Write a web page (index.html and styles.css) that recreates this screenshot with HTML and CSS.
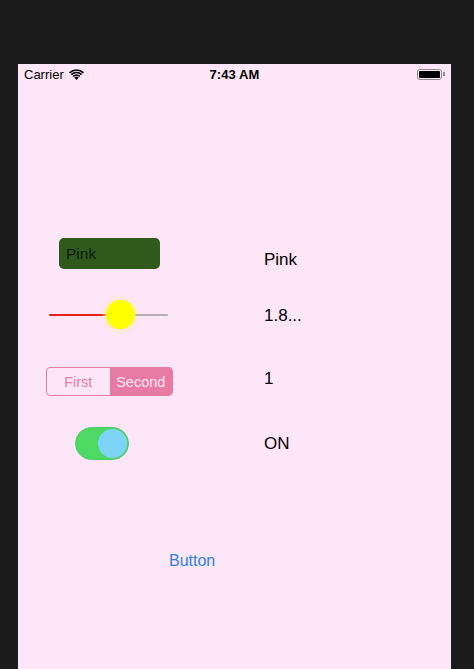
FILE: index.html
```html
<!DOCTYPE html>
<html>
<head>
<meta charset="utf-8">
<link rel="stylesheet" href="styles.css">
</head>
<body>
<div class="screen">
  <div class="status">
    <div class="status-left">
      <span class="carrier">Carrier</span>
      <svg class="wifi" width="15" height="11" viewBox="0 0 15 11">
        <path d="M7.5 11 L5.3 8.6 A3.2 3.2 0 0 1 9.7 8.6 Z" fill="#000"/>
        <path d="M3.6 6.8 A5.6 5.6 0 0 1 11.4 6.8 L10.3 8 A4.1 4.1 0 0 0 4.7 8 Z" fill="#000"/>
        <path d="M1.8 5 A8.2 8.2 0 0 1 13.2 5 L12.1 6.2 A6.7 6.7 0 0 0 2.9 6.2 Z" fill="#000"/>
        <path d="M0 3.2 A10.8 10.8 0 0 1 15 3.2 L13.9 4.4 A9.3 9.3 0 0 0 1.1 4.4 Z" fill="#000"/>
      </svg>
    </div>
    <div class="time">7:43 AM</div>
    <div class="status-right">
      <div class="battery"><div class="battery-fill"></div></div>
      <div class="battery-nub"></div>
    </div>
  </div>

  <div class="content">
    <div class="row row1">
      <div class="cell"><div class="field">Pink</div></div>
      <div class="label l1">Pink</div>
    </div>
    <div class="row row2">
      <div class="cell">
        <div class="slider">
          <div class="track-min"></div>
          <div class="thumb"></div>
          <div class="track-max"></div>
        </div>
      </div>
      <div class="label l2">1.8...</div>
    </div>
    <div class="row row3">
      <div class="cell">
        <div class="segmented">
          <div class="seg">First</div>
          <div class="seg seg-on">Second</div>
        </div>
      </div>
      <div class="label l3">1</div>
    </div>
    <div class="row row4">
      <div class="cell">
        <div class="switch"><div class="knob"></div></div>
      </div>
      <div class="label l4">ON</div>
    </div>
    <div class="button-row"><span class="btn">Button</span></div>
  </div>
</div>
</body>
</html>
```
FILE: styles.css
```css
html, body {
  margin: 0;
  padding: 0;
  background: #1c1c1c;
  width: 474px;
  height: 669px;
  overflow: hidden;
}
body {
  font-family: "Liberation Sans", Arial, sans-serif;
}
.screen {
  margin-left: 18px;
  margin-top: 64px;
  width: 433px;
  height: 605px;
  background: #fde6f8;
  display: flex;
  flex-direction: column;
}
.status {
  height: 20px;
  display: flex;
  align-items: center;
  justify-content: space-between;
  padding: 0 6px;
  font-size: 13px;
  color: #000;
}
.status-left {
  display: flex;
  align-items: center;
  gap: 5px;
  width: 120px;
}
.wifi { display: block; }
.time {
  font-weight: bold;
  font-size: 13px;
  letter-spacing: 0.1px;
}
.status-right {
  width: 120px;
  display: flex;
  justify-content: flex-end;
  align-items: center;
}
.battery {
  width: 21px;
  height: 7px;
  border: 1.5px solid #8e8a8e;
  border-radius: 3px;
  padding: 1px;
  display: flex;
}
.battery-fill {
  flex: 1;
  background: #000;
  border-radius: 1px;
}
.battery-nub {
  width: 1.5px;
  height: 4px;
  background: #8e8a8e;
  margin-left: 1px;
}
.content {
  display: flex;
  flex-direction: column;
  padding-top: 154px;
}
.row {
  display: flex;
  align-items: flex-start;
}
.cell {
  width: 246px;
  display: flex;
}
.label {
  font-size: 17px;
  line-height: 20px;
  color: #000;
}
.row1 { height: 31px; }
.l1 { margin-top: 12px; }
.field {
  margin-left: 41px;
  height: 31px;
  padding-left: 7px;
  box-sizing: border-box;
  width: 101px;
  background: #2f5a1c;
  border-radius: 5px;
  font-size: 15.5px;
  line-height: 31px;
  color: #0e1a07;
}
.row2 { margin-top: 31px; height: 29px; }
.l2 { margin-top: 6px; }
.slider {
  margin-left: 31px;
  width: 119px;
  height: 29px;
  display: flex;
  align-items: center;
}
.track-min {
  width: 57px;
  height: 2px;
  background: #e3201c;
  border-radius: 1px;
}
.thumb {
  width: 29px;
  height: 29px;
  border-radius: 50%;
  background: #ffff00;
  box-shadow: 0 0 4px 2px rgba(255, 236, 160, 0.7);
  flex-shrink: 0;
}
.track-max {
  flex: 1;
  height: 2px;
  background: #b5adb6;
  border-radius: 1px;
}
.row3 { margin-top: 38px; height: 29px; }
.l3 { margin-top: 2px; }
.segmented {
  margin-left: 28px;
  width: 127px;
  height: 29px;
  box-sizing: border-box;
  border: 1px solid #e87ba3;
  border-radius: 4px;
  display: flex;
  overflow: hidden;
}
.seg {
  flex: 1;
  display: flex;
  align-items: center;
  justify-content: center;
  font-size: 14.5px;
  color: #e87ba3;
}
.seg-on {
  background: #e87ba3;
  color: #fde6f4;
}
.row4 { margin-top: 31px; height: 33px; }
.l4 { margin-top: 7px; }
.switch {
  margin-left: 57px;
  width: 54px;
  height: 33px;
  box-sizing: border-box;
  border-radius: 17px;
  background: #4cd964;
  border: 1px solid #4fc86a;
  display: flex;
  justify-content: flex-end;
  align-items: center;
  padding: 1px;
}
.knob {
  width: 29px;
  height: 29px;
  border-radius: 50%;
  background: #7dd4f7;
}
.button-row {
  margin-top: 91px;
  height: 20px;
  display: flex;
  padding-left: 151px;
}
.btn {
  font-size: 16px;
  line-height: 20px;
  color: #2d82e8;
}
```
